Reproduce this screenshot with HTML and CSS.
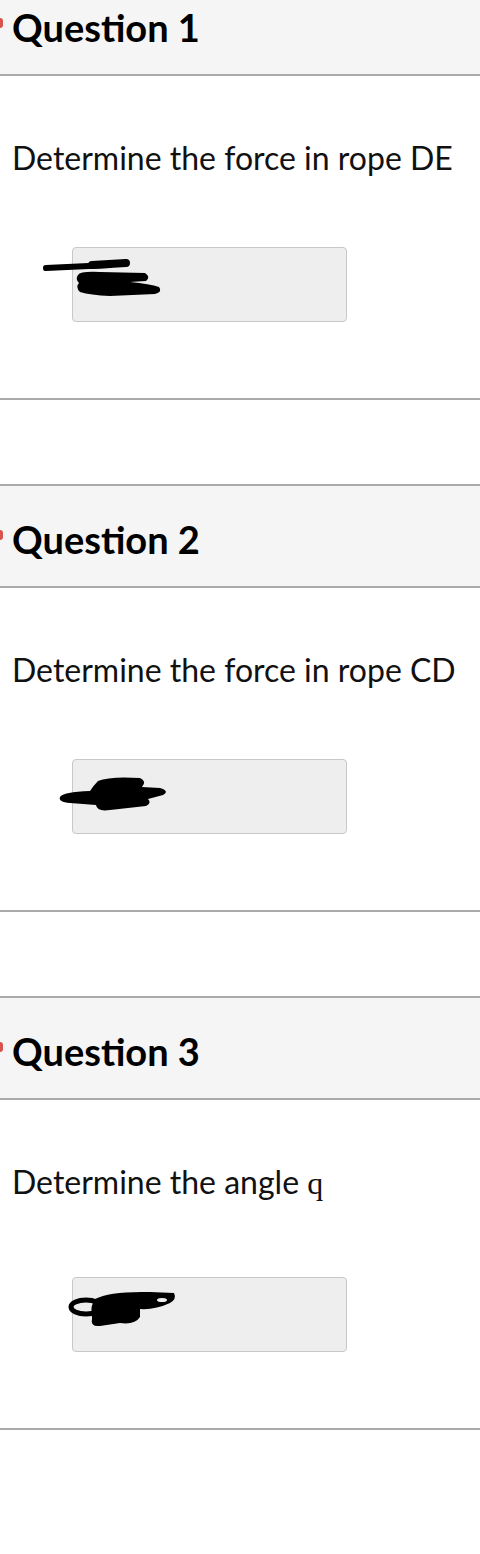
FILE: index.html
```html
<!DOCTYPE html>
<html lang="en">
<head>
<meta charset="utf-8">
<title>Quiz</title>
<link rel="stylesheet" href="styles.css">
</head>
<body>
<div class="quiz">
  <section class="question">
    <div class="q-header"><span class="flag"></span><h2 class="q-title">Question 1</h2></div>
    <div class="q-body">
      <p class="q-text">Determine the force in rope DE</p>
      <div class="answer">
        <div class="answer-box"></div>
        <svg class="scribble" width="480" height="75" viewBox="0 0 480 75">
          <path d="M46 21 L110 18" stroke="#000" stroke-width="6" stroke-linecap="round" fill="none"/>
          <path d="M92 18 L126 16" stroke="#000" stroke-width="8" stroke-linecap="round" fill="none"/>
          <path d="M78 28 Q80 24 100 25 L145 26 Q151 30 146 34 L130 35 Q150 37 159 40 Q163 45 155 47 L110 49 Q90 48 80 45 Q75 40 79 36 Q75 32 78 28 Z" fill="#000"/>
        </svg>
      </div>
    </div>
  </section>
  <section class="question">
    <div class="q-header"><span class="flag"></span><h2 class="q-title">Question 2</h2></div>
    <div class="q-body">
      <p class="q-text">Determine the force in rope CD</p>
      <div class="answer">
        <div class="answer-box"></div>
        <svg class="scribble" width="480" height="75" viewBox="0 0 480 75">
          <path d="M98 22 Q110 17 140 19 Q147 22 142 28 L160 29 Q170 32 163 36 L148 40 Q152 44 146 47 L110 51 Q97 53 96 46 L70 44 Q58 43 60 38 Q63 33 90 32 Q94 26 98 22 Z" fill="#000"/>
        </svg>
      </div>
    </div>
  </section>
  <section class="question">
    <div class="q-header"><span class="flag"></span><h2 class="q-title">Question 3</h2></div>
    <div class="q-body">
      <p class="q-text q-text--tall">Determine the angle <span class="sym">q</span></p>
      <div class="answer">
        <div class="answer-box"></div>
        <svg class="scribble" width="480" height="75" viewBox="0 0 480 75">
          <ellipse cx="86" cy="30" rx="15" ry="7" stroke="#000" stroke-width="5" fill="none"/>
          <path d="M95 22 Q110 14 150 15 L174 16 Q177 22 170 26 Q155 33 140 32 L140 40 Q135 48 120 46 L100 49 Q90 50 92 42 L92 36 Q90 30 95 22 Z" fill="#000"/>
          <ellipse cx="162" cy="23" rx="5" ry="2" fill="#eeeeee"/>
        </svg>
      </div>
    </div>
  </section>
</div>
</body>
</html>
```
FILE: styles.css
```css
* { box-sizing: border-box; }

body {
  margin: 0;
  background: #ffffff;
  font-family: Lato, "Open Sans", "Liberation Sans", sans-serif;
  color: #111;
}

.quiz {
  margin-top: -28px;
}

.question {
  border-top: 2px solid #aaaaaa;
  border-bottom: 2px solid #aaaaaa;
  margin-bottom: 84px;
}

.q-header {
  position: relative;
  height: 102px;
  background: #f5f5f5;
  border-bottom: 2px solid #aaaaaa;
  padding: 32px 12px 0;
}

.flag {
  position: absolute;
  left: 0;
  top: 44px;
  width: 3px;
  height: 10px;
  background: #d9534f;
  border-radius: 0 3px 3px 0;
}

.q-title {
  margin: 0;
  font-size: 38px;
  line-height: 43px;
  font-weight: 700;
  color: #000;
}

.q-body {
  padding: 64px 12px 76px;
}

.q-text {
  margin: 0;
  font-size: 32px;
  line-height: 36px;
  color: #111;
}

.q-text--tall {
  padding-bottom: 5px;
}

.sym {
  font-family: "Liberation Serif", "Times New Roman", serif;
}

.answer {
  position: relative;
  margin-top: 71px;
  height: 75px;
}

.answer-box {
  margin-left: 60px;
  width: 275px;
  height: 75px;
  background: #eeeeee;
  border: 1px solid #c8c8c8;
  border-radius: 4px;
}

.scribble {
  position: absolute;
  left: -12px;
  top: 0;
}
```
